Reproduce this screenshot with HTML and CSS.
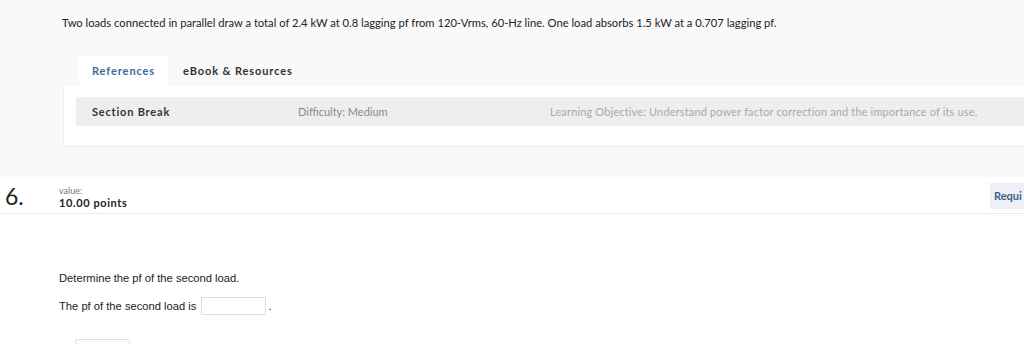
FILE: index.html
```html
<!DOCTYPE html>
<html>
<head>
<meta charset="utf-8">
<link rel="stylesheet" href="styles.css">
</head>
<body>
<div class="top">
  <p class="prompt">Two loads connected in parallel draw a total of 2.4 kW at 0.8 lagging pf from 120-Vrms, 60-Hz line. One load absorbs 1.5 kW at a 0.707 lagging pf.</p>
  <div class="tabs">
    <div class="tab active">References</div>
    <div class="tab">eBook &amp; Resources</div>
  </div>
  <div class="panel">
    <div class="bar">
      <span class="sec">Section Break</span>
      <span class="diff">Difficulty: Medium</span>
      <span class="obj">Learning Objective: Understand power factor correction and the importance of its use.</span>
    </div>
  </div>
</div>
<div class="qhead">
  <div class="qnum">6.</div>
  <div class="qval">
    <div class="vlabel">value:</div>
    <div class="vpoints">10.00 points</div>
  </div>
  <div class="req">Requi</div>
</div>
<div class="qbody">
  <p class="line1">Determine the pf of the second load.</p>
  <p class="line2">The pf of the second load is <span class="inp"></span>.</p>
  <div class="btn"></div>
</div>
</body>
</html>
```
FILE: styles.css
```css
html, body {
  margin: 0;
  padding: 0;
  background: #fff;
  overflow: hidden;
}
body {
  width: 1024px;
  height: 344px;
  font-family: "Lato", "Open Sans", sans-serif;
  color: #333;
}
.top {
  background: #f9f9f9;
  height: 177px;
  padding-top: 16px;
  box-sizing: border-box;
}
.prompt {
  margin: 0 0 0 62px;
  font-size: 11.2px;
  line-height: 14px;
  color: #222;
}
.tabs {
  display: flex;
  margin: 26px 0 0 79px;
  height: 30px;
}
.tab {
  font-size: 11px;
  font-weight: 700;
  letter-spacing: 0.9px;
  color: #333;
  padding: 0 12px 0 13px;
  line-height: 30px;
}
.tab.active {
  background: #fff;
  color: #3b689e;
  border-radius: 2px 2px 0 0;
  width: 64px;
  margin-right: 2px;
}
.panel {
  margin-left: 63px;
  background: #fff;
  border: 1px solid #ebebeb;
  border-right: none;
  border-top: none;
  border-radius: 0 0 0 3px;
  padding: 11px 0 20px 12px;
}
.bar {
  background: #eeeeee;
  height: 29px;
  display: flex;
  align-items: center;
  border-radius: 3px 0 0 3px;
  font-size: 11px;
}
.sec {
  font-weight: 700;
  letter-spacing: 0.8px;
  color: #333;
  margin-left: 16px;
  width: 206px;
}
.diff {
  color: #8a8a8a;
  width: 252px;
}
.obj {
  color: #a9a9a9;
  letter-spacing: 0.15px;
}
.qhead {
  height: 36px;
  border-bottom: 1px solid #ececec;
  display: flex;
  position: relative;
}
.qnum {
  width: 59px;
  font-size: 23px;
  font-weight: 400;
  color: #222;
  padding: 7px 0 0 5px;
  box-sizing: border-box;
  line-height: 24px;
}
.qval {
  padding-top: 8px;
}
.vlabel {
  font-size: 9px;
  color: #777;
  line-height: 11px;
}
.vpoints {
  font-size: 11px;
  font-weight: 700;
  letter-spacing: 0.6px;
  color: #222;
  line-height: 14px;
}
.req {
  position: absolute;
  left: 990px;
  top: 6px;
  width: 40px;
  height: 26px;
  line-height: 26px;
  padding: 0 4px;
  background: #edf0f4;
  border-radius: 3px;
  color: #3b5f8f;
  font-size: 11px;
  font-weight: 700;
  white-space: nowrap;
}
.qbody {
  padding: 57px 0 0 59px;
  font-family: "Liberation Sans", Arial, sans-serif;
  font-size: 11.2px;
  color: #222;
}
.line1 {
  margin: 0;
  line-height: 14px;
}
.line2 {
  margin: 12px 0 0 0;
  line-height: 17px;
  display: flex;
  align-items: center;
}
.inp {
  display: inline-block;
  width: 63px;
  height: 16px;
  border: 1px solid #ddd;
  margin: 0 2px 0 5px;
  background: #fff;
}
.btn {
  margin: 24px 0 0 16px;
  width: 53px;
  height: 20px;
  border: 1px solid #ddd;
  border-radius: 3px;
}
```
